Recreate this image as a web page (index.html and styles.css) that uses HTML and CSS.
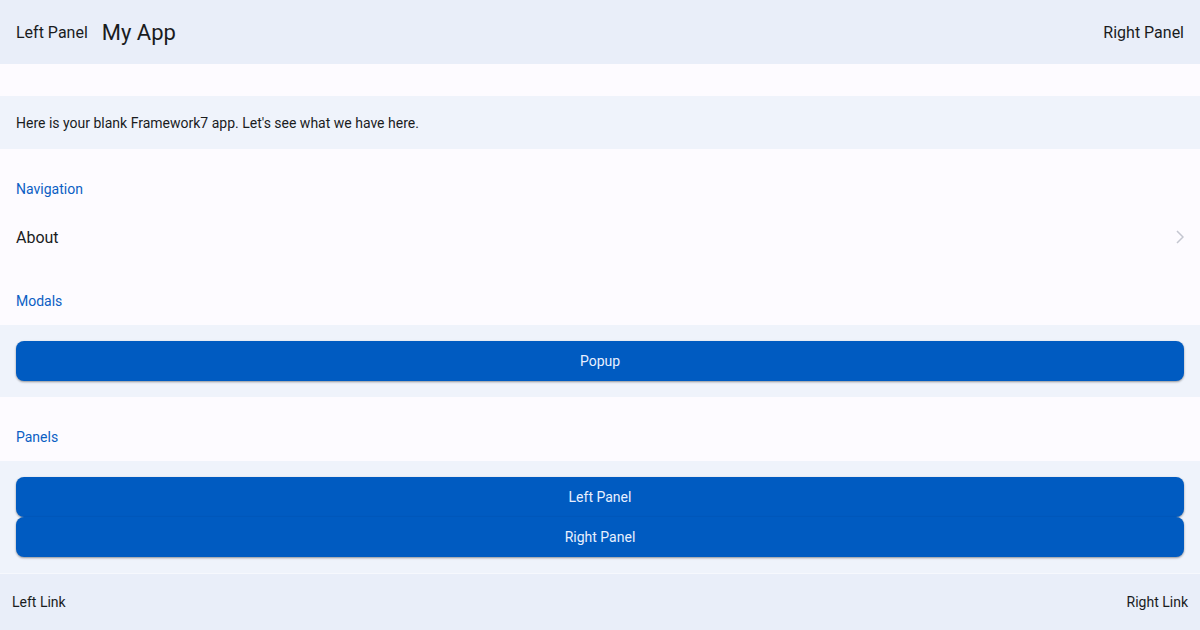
FILE: index.html
```html
<!DOCTYPE html>
<html>
<head>
<meta charset="utf-8">
<link rel="stylesheet" href="styles.css">
</head>
<body>
<div class="app">
  <header class="navbar">
    <span class="nav-link">Left Panel</span>
    <span class="nav-title">My App</span>
    <span class="spacer"></span>
    <span class="nav-link">Right Panel</span>
  </header>
  <main class="page">
    <div class="block-strong text-block">Here is your blank Framework7 app. Let's see what we have here.</div>
    <div class="block-title">Navigation</div>
    <div class="list-item">
      <span>About</span>
      <svg class="chevron" width="8" height="14" viewBox="0 0 8 14"><path d="M1 1 L7 7 L1 13" fill="none" stroke="#c4c6d0" stroke-width="1.5"/></svg>
    </div>
    <div class="block-title modals-title">Modals</div>
    <div class="block-strong btn-block">
      <div class="button">Popup</div>
    </div>
    <div class="block-title panels-title">Panels</div>
    <div class="block-strong btn-block">
      <div class="button">Left Panel</div>
      <div class="button">Right Panel</div>
    </div>
  </main>
  <footer class="toolbar">
    <span>Left Link</span>
    <span>Right Link</span>
  </footer>
</div>
</body>
</html>
```
FILE: styles.css
```css
* { box-sizing: border-box; }
html, body { margin: 0; padding: 0; }
body {
  font-family: Roboto, "Liberation Sans", sans-serif;
  color: #1a1c1e;
  background: #fdfbff;
}
.app {
  width: 1200px;
  height: 630px;
  display: flex;
  flex-direction: column;
  overflow: hidden;
}
.navbar {
  height: 64px;
  background: #e9eef9;
  display: flex;
  align-items: center;
  padding: 0 16px;
  flex-shrink: 0;
}
.nav-link { font-size: 16px; color: #1a1c1e; }
.nav-title { font-size: 22px; margin-left: 14px; }
.spacer { flex: 1; }
.page {
  flex: 1;
  padding-top: 32px;
  background: #fdfbff;
}
.block-strong { background: #eff3fb; }
.text-block {
  height: 53px;
  padding: 0 16px;
  display: flex;
  align-items: center;
  font-size: 14px;
}
.block-title {
  font-size: 14px;
  color: #0b5fc4;
  padding: 0 16px;
  margin-top: 32px;
  line-height: 16px;
}
.list-item {
  height: 48px;
  margin-top: 16px;
  padding: 0 16px;
  display: flex;
  align-items: center;
  justify-content: space-between;
  font-size: 16px;
}
.modals-title { margin-top: 32px; }
.panels-title { margin-top: 32px; }
.btn-block {
  margin-top: 16px;
  padding: 16px;
}
.button {
  height: 40px;
  background: #005bc1;
  color: #e8f0ff;
  border-radius: 8px;
  font-size: 14px;
  display: flex;
  align-items: center;
  justify-content: center;
  box-shadow: 0 1px 2px rgba(0,0,0,0.3), 0 1px 3px rgba(0,0,0,0.12);
}
.toolbar {
  height: 57px;
  background: #e9eef9;
  border-top: 1px solid #f6f8fd;
  display: flex;
  align-items: center;
  justify-content: space-between;
  padding: 0 12px;
  font-size: 14px;
  flex-shrink: 0;
}
```
